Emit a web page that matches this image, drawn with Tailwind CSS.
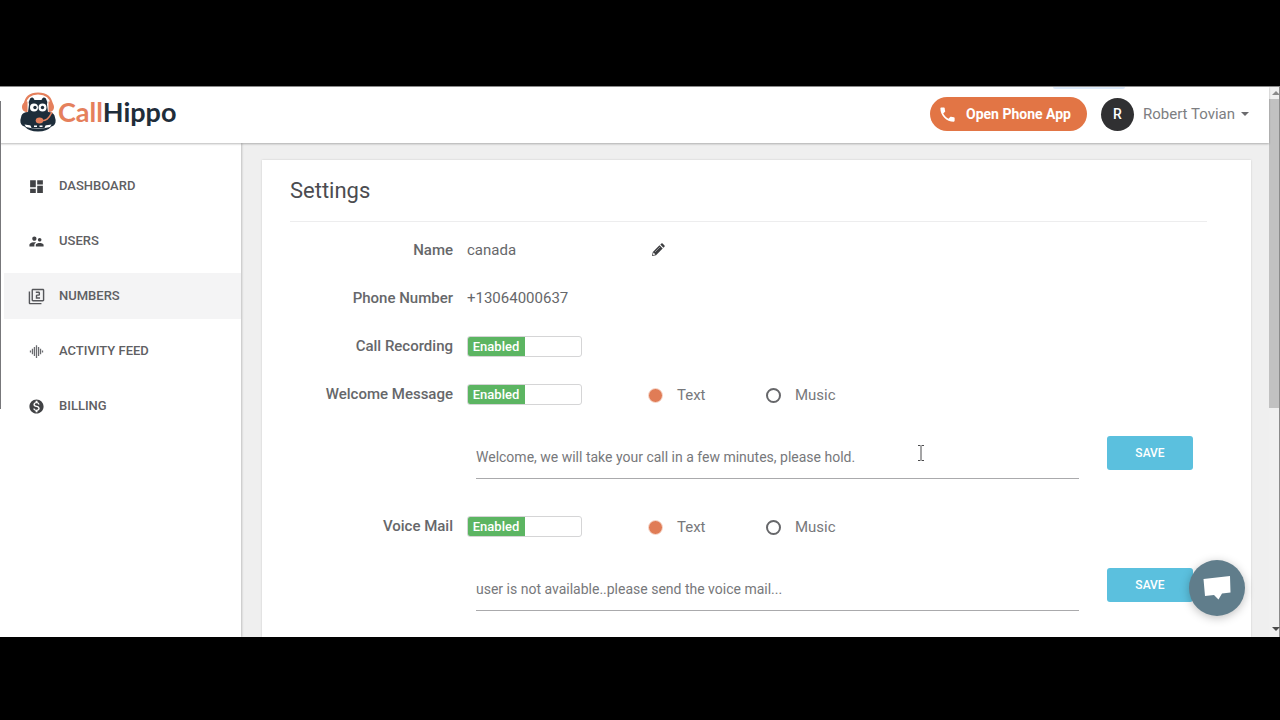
<!DOCTYPE html>
<html lang="en">
<head>
<meta charset="utf-8">
<meta name="viewport" content="width=device-width, initial-scale=1">
<title>CallHippo - Settings</title>
<script src="https://cdn.jsdelivr.net/npm/@tailwindcss/browser@4"></script>
</head>
<body class="bg-black font-['Roboto','Liberation_Sans',sans-serif] text-[#66676a]">
<div class="flex h-screen flex-col pt-[86px] pb-[83px]">
<div class="relative flex min-h-0 flex-1 overflow-hidden border-t border-[#8a8a8a] bg-[#efefef]">

  <div class="flex min-w-0 flex-1 flex-col">
    <header class="relative z-10 flex h-14 shrink-0 items-center justify-between bg-white pr-5 pb-0.5 pl-5 shadow-[0_1px_2px_rgba(0,0,0,0.28)]">
      <a href="#" class="flex items-center" aria-label="CallHippo">
        <svg class="-mt-1 h-10 w-9" viewBox="0 0 36 40" aria-hidden="true">
          <path d="M4.500 13C5.500 5.500 10 1.500 18 1.500S31 5.500 32 13" fill="none" stroke="#e5805c" stroke-width="2"/>
          <path d="M7.500 9.500C4 9.500 2 12 2 15s2 5 5.500 5zM28.500 9.500c3.500 0 5.500 2.500 5.500 5.500s-2 5-5.500 5z" fill="#e5805c"/>
          <path d="M9.500 8q.5-3 3-2.500 1.500.5 2 2.500h7q.5-2 2-2.500 2.500-.5 3 2.500 1.500 2 .5 4.500l1 7.500q5 0 6.500 3.500 1.500 4.500 1 7-1 3.500-4 4Q27 39.500 18 39.500T4.500 34.500q-3-.5-4-4-.5-2.500 1-7Q3 20 8 20l1-7.500Q8 10 9.500 8z" fill="#1d2d3a"/>
          <path d="M4.500 32.500q13.500 2.500 27 0l-1.500 2.500q-12 3-24 0z" fill="#fff"/>
          <path d="M10 32h16l-1.500 4h-13z" fill="#1d2d3a"/>
          <path d="M14 33.500h3v1.500h-3zM19.500 33.500h3v1.500h-3z" fill="#fff"/>
          <circle cx="14" cy="15.500" r="4" fill="#fff"/><circle cx="22.500" cy="15.500" r="4" fill="#fff"/>
          <circle cx="15" cy="15.500" r="1.700" fill="#1d2d3a"/><circle cx="22.500" cy="15.500" r="1.700" fill="#1d2d3a"/>
          <path d="M20 28.500c6 1 9-2 12-8.500" fill="none" stroke="#e5805c" stroke-width="1.600"/>
          <ellipse cx="19.500" cy="28.500" rx="3.800" ry="2.900" fill="#e5805c"/>
        </svg>
        <span class="ml-0.5 -mt-1 font-['Lato'] text-[27px] leading-8 font-bold text-[#1f2d3a]"><span class="text-[#e5805c]">Call</span>Hippo</span>
      </a>
      <span class="absolute top-0 right-36 h-0.5 w-18 rounded-b-full bg-[#dceafb]"></span>
      <div class="flex items-center">
        <button type="button" class="flex h-[34px] items-center gap-[9px] rounded-full bg-[#e27545] pr-4 pl-2 text-[14px] font-bold text-white">
          <svg class="size-[19px]" viewBox="0 0 24 24" fill="currentColor" aria-hidden="true"><path d="M6.620 10.790c1.440 2.830 3.760 5.140 6.590 6.590l2.200-2.200c.27-.27.67-.36 1.020-.24 1.120.37 2.330.57 3.570.57.55 0 1 .45 1 1V20c0 .55-.45 1-1 1C10.610 21 3 13.390 3 4c0-.55.45-1 1-1h3.500c.55 0 1 .45 1 1 0 1.250.2 2.450.57 3.570.11.35.03.74-.25 1.020z"/></svg>
          Open Phone App
        </button>
        <span class="ml-3.5 flex size-[33px] items-center justify-center rounded-full bg-[#303032] text-sm font-medium text-white">R</span>
        <button type="button" class="ml-[9px] flex items-center gap-1.5 text-[15px] text-[#7d7e82]">Robert Tovian
          <svg class="h-1 w-2" viewBox="0 0 8 4" fill="#6b6b6e" aria-hidden="true"><path d="M0 0h8L4 4z"/></svg>
        </button>
      </div>
    </header>

    <div class="flex min-h-0 flex-1">
      <nav class="w-[241px] shrink-0 bg-white pt-5 pl-1 text-[13px] font-medium text-[#5f6063] shadow-[1px_0_2px_rgba(0,0,0,0.2)]">
        <ul class="flex flex-col gap-[9px]">
          <li><a href="#" class="flex h-[46px] items-center gap-3.5 pl-6">
            <svg class="size-[17px] text-[#414245]" viewBox="0 0 24 24" fill="currentColor" aria-hidden="true"><path d="M3 13h8V3H3zm0 8h8v-6H3zm10 0h8V11h-8zm0-18v6h8V3z"/></svg>DASHBOARD</a></li>
          <li><a href="#" class="flex h-[46px] items-center gap-3.5 pl-6">
            <svg class="size-[17px] text-[#414245]" viewBox="0 0 24 24" fill="currentColor" aria-hidden="true"><path d="M16.500 12c1.380 0 2.490-1.120 2.490-2.500S17.880 7 16.500 7 14 8.120 14 9.500s1.120 2.500 2.500 2.500M9 11c1.660 0 2.990-1.340 2.990-3S10.660 5 9 5 6 6.340 6 8s1.340 3 3 3m7.500 3c-1.830 0-5.500.92-5.500 2.750V19h11v-2.250c0-1.830-3.670-2.750-5.500-2.750M9 13c-2.330 0-7 1.170-7 3.500V19h7v-2.250c0-.85.33-2.340 2.370-3.470C10.500 13.100 9.660 13 9 13"/></svg>USERS</a></li>
          <li><a href="#" aria-current="page" class="flex h-[46px] items-center gap-3.5 bg-[#f4f4f5] pl-6">
            <svg class="size-[17px] text-[#55565a]" viewBox="0 0 24 24" fill="currentColor" aria-hidden="true"><path d="M3 5H1v16c0 1.100.9 2 2 2h16v-2H3zm18-4H7c-1.100 0-2 .9-2 2v14c0 1.100.9 2 2 2h14c1.100 0 2-.9 2-2V3c0-1.100-.9-2-2-2m0 16H7V3h14zm-4-4h-4v-2h2c1.100 0 2-.89 2-2V7c0-1.110-.9-2-2-2h-4v2h4v2h-2c-1.100 0-2 .89-2 2v4h6z"/></svg>NUMBERS</a></li>
          <li><a href="#" class="flex h-[46px] items-center gap-3.5 pl-6">
            <svg class="size-[17px] text-[#6a6b6f]" viewBox="0 0 24 24" fill="none" stroke="currentColor" stroke-width="1.800" aria-hidden="true"><path d="M3.500 10.500v3M6.300 8v8M9.100 5.500v13M12 3v18M14.900 5.500v13M17.700 8v8M20.500 10.500v3"/></svg>ACTIVITY FEED</a></li>
          <li><a href="#" class="flex h-[46px] items-center gap-3.5 pl-6">
            <svg class="size-[17px] text-[#414245]" viewBox="0 0 24 24" fill="currentColor" aria-hidden="true"><path d="M12 2C6.480 2 2 6.480 2 12s4.480 10 10 10 10-4.480 10-10S17.520 2 12 2m1.410 16.090V20h-2.670v-1.930c-1.710-.36-3.160-1.460-3.270-3.400h1.960c.1 1.050.82 1.870 2.650 1.870 1.960 0 2.400-.98 2.400-1.590 0-.83-.44-1.610-2.670-2.140-2.480-.6-4.180-1.620-4.180-3.670 0-1.720 1.390-2.840 3.110-3.210V4h2.670v1.950c1.860.45 2.790 1.860 2.850 3.390H14.300c-.05-1.110-.64-1.870-2.220-1.870-1.500 0-2.400.68-2.400 1.640 0 .84.65 1.390 2.670 1.910s4.180 1.390 4.180 3.910c-.01 1.830-1.380 2.830-3.120 3.160"/></svg>BILLING</a></li>
        </ul>
      </nav>

      <main class="min-w-0 flex-1 pt-[17px] pr-[18px] pl-[21px]">
        <section class="h-full bg-white px-7 shadow-[0_0_2px_rgba(0,0,0,0.15)]">
          <div class="mr-4 border-b border-[#ededee] pt-[15px] pb-3.5">
            <h1 class="text-[22px] leading-8 text-[#4b4c50]">Settings</h1>
          </div>

          <form class="pt-1 text-[15px]">
            <div class="flex h-12 items-center">
              <span class="w-[163px] text-right font-medium">Name</span>
              <span class="ml-3.5 w-[184px]">canada</span>
              <button type="button" aria-label="Edit name">
                <svg class="size-3.5" viewBox="0 0 14 14" aria-hidden="true"><path d="M1 13l.8-4L8.500 2.300l3.200 3.200L5 12.200z" fill="#3d3e41"/><path d="M9.300 1.600L10.400.6q.6-.5 1.200 0l1.900 1.900q.5.600 0 1.200l-1.100 1z" fill="#3d3e41"/><path d="M2.500 9.600l1.900 1.900-2.100.5-.4-.4z" fill="#fff"/><path d="M4 9l5-5" stroke="#a5a5a7" stroke-width=".8"/></svg>
              </button>
            </div>

            <div class="flex h-12 items-center">
              <span class="w-[163px] text-right font-medium">Phone Number</span>
              <span class="ml-3.5">+13064000637</span>
            </div>

            <div class="flex h-12 items-center">
              <label for="rec" class="w-[163px] text-right font-medium">Call Recording</label>
              <label class="mt-px ml-3.5 flex h-[21px] w-[115px] overflow-hidden rounded-[3px] border border-[#d5d5d6] bg-white"><input id="rec" type="checkbox" role="switch" checked class="sr-only"><span class="-m-px flex w-[58px] items-center justify-center bg-[#5cb562] text-[13px] font-medium text-white">Enabled</span></label>
            </div>

            <div class="flex h-12 items-center">
              <label for="wel" class="w-[163px] text-right font-medium">Welcome Message</label>
              <label class="mt-px ml-3.5 flex h-[21px] w-[115px] overflow-hidden rounded-[3px] border border-[#d5d5d6] bg-white"><input id="wel" type="checkbox" role="switch" checked class="sr-only"><span class="-m-px flex w-[58px] items-center justify-center bg-[#5cb562] text-[13px] font-medium text-white">Enabled</span></label>
              <label class="mt-0.5 ml-[66px] flex w-[118px] items-center gap-3.5 text-[#77787b]"><input type="radio" name="welcome" checked class="size-[15px] appearance-none rounded-full border-2 border-[#66676a] checked:border checked:border-[#f8ddd2] checked:bg-[#e07c56]">Text</label>
              <label class="mt-0.5 flex items-center gap-3.5 text-[#77787b]"><input type="radio" name="welcome" class="size-[15px] appearance-none rounded-full border-2 border-[#66676a] checked:border checked:border-[#f8ddd2] checked:bg-[#e07c56]">Music</label>
            </div>

            <div class="flex h-[84px] items-start pt-[18px] pr-[30px] pl-[186px]">
              <input type="text" aria-label="Welcome message text" value="Welcome, we will take your call in a few minutes, please hold." class="h-[43px] min-w-0 flex-1 border-b border-[#aaaaac] bg-transparent text-[14px] text-[#77787b] outline-none">
              <button type="button" class="ml-7 h-[34px] w-[86px] rounded-[3px] bg-[#5bc0de] text-[12px] font-medium text-white">SAVE</button>
            </div>

            <div class="flex h-12 items-center">
              <label for="vm" class="w-[163px] text-right font-medium">Voice Mail</label>
              <label class="mt-px ml-3.5 flex h-[21px] w-[115px] overflow-hidden rounded-[3px] border border-[#d5d5d6] bg-white"><input id="vm" type="checkbox" role="switch" checked class="sr-only"><span class="-m-px flex w-[58px] items-center justify-center bg-[#5cb562] text-[13px] font-medium text-white">Enabled</span></label>
              <label class="mt-0.5 ml-[66px] flex w-[118px] items-center gap-3.5 text-[#77787b]"><input type="radio" name="voicemail" checked class="size-[15px] appearance-none rounded-full border-2 border-[#66676a] checked:border checked:border-[#f8ddd2] checked:bg-[#e07c56]">Text</label>
              <label class="mt-0.5 flex items-center gap-3.5 text-[#77787b]"><input type="radio" name="voicemail" class="size-[15px] appearance-none rounded-full border-2 border-[#66676a] checked:border checked:border-[#f8ddd2] checked:bg-[#e07c56]">Music</label>
            </div>

            <div class="flex h-[84px] items-start pt-[18px] pr-[30px] pl-[186px]">
              <input type="text" aria-label="Voice mail text" value="user is not available..please send the voice mail..." class="h-[43px] min-w-0 flex-1 border-b border-[#aaaaac] bg-transparent text-[14px] text-[#77787b] outline-none">
              <button type="button" class="ml-7 h-[34px] w-[86px] rounded-[3px] bg-[#5bc0de] text-[12px] font-medium text-white">SAVE</button>
            </div>
          </form>
        </section>
      </main>
    </div>
  </div>

  <!-- Scrollbar -->
  <div class="flex w-[11px] shrink-0 flex-col items-center justify-between border-r border-[#8b8b8b] bg-[#f0f0f0]">
    <svg class="mt-1 ml-1 mb-1 h-1 w-2 shrink-0" viewBox="0 0 8 4" fill="#8a8a8a" aria-hidden="true"><path d="M0 4h8L4 0z"/></svg>
    <div class="h-[309px] w-full bg-[#c1c1c1]"></div>
    <div class="flex-1"></div>
    <svg class="mb-1.5 ml-1 h-1 w-2 shrink-0" viewBox="0 0 8 4" fill="#4a4a4a" aria-hidden="true"><path d="M0 0h8L4 4z"/></svg>
  </div>

  <!-- Window edge -->
  <div class="absolute top-3.5 left-0 z-20 h-[308px] w-px bg-[#77777a]"></div>

  <!-- Text cursor -->
  <svg class="absolute top-[358px] left-[917px] h-4 w-2" viewBox="0 0 8 16" fill="none" stroke="#4a4a4c" aria-hidden="true"><path d="M1 .5h2.500M4.500.5H7M4 1v14M1 15.500h2.500M4.500 15.500H7"/></svg>

  <button type="button" aria-label="Open chat" class="absolute right-[35px] bottom-[21px] flex size-14 items-center justify-center rounded-full bg-[#607d8b] shadow-[0_2px_10px_rgba(0,0,0,0.25)]">
    <svg class="h-6 w-7" viewBox="0 0 28 24" fill="#fff" aria-hidden="true"><path d="M.5 3L27 0l.5 16.500-8.500 1-3.500 6-4.500-4.500-9 1z"/></svg>
  </button>
</div>
</div>
</body>
</html>
